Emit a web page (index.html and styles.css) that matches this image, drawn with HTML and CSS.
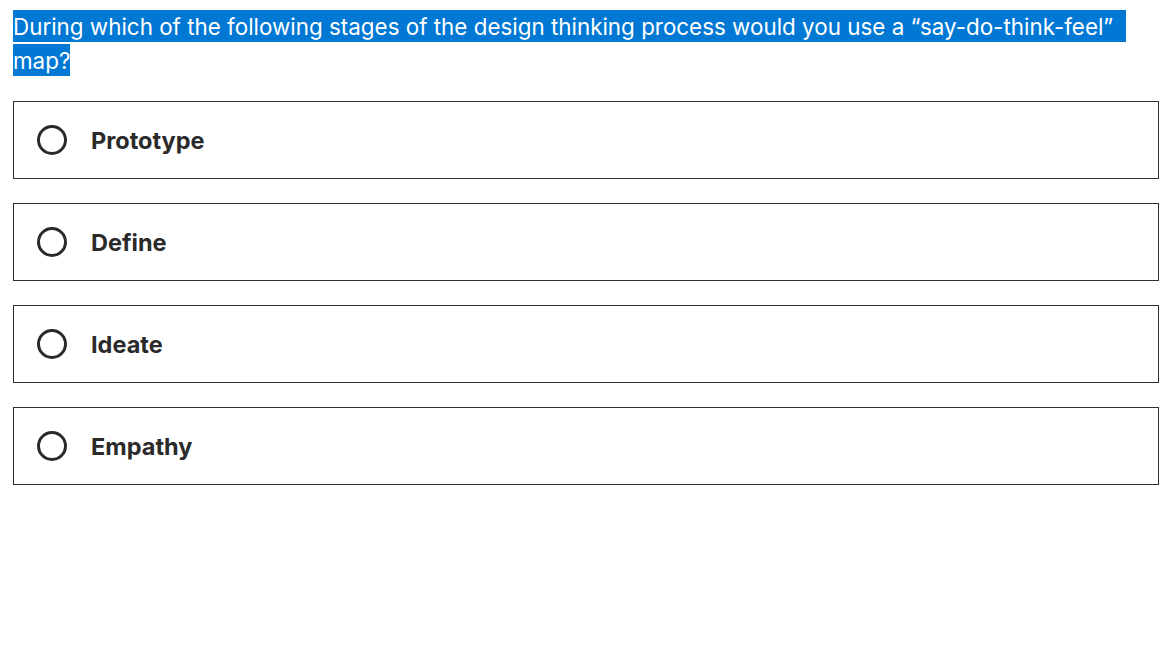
FILE: index.html
```html
<!DOCTYPE html>
<html lang="en">
<head>
    <meta charset="UTF-8">
    <title>Quiz question</title>
    <link rel="stylesheet" href="styles.css">
</head>
<body>
    <div class="question">
        <p class="prompt"><span class="selected">During which of the following stages of the design thinking process would you use a “say-do-think-feel”&nbsp;&nbsp;</span> <span class="selected">map?</span></p>

        <div class="options">
            <label class="option">
                <span class="radio"></span>
                <span class="option-text">Prototype</span>
            </label>
            <label class="option">
                <span class="radio"></span>
                <span class="option-text">Define</span>
            </label>
            <label class="option">
                <span class="radio"></span>
                <span class="option-text">Ideate</span>
            </label>
            <label class="option">
                <span class="radio"></span>
                <span class="option-text">Empathy</span>
            </label>
        </div>
    </div>
</body>
</html>
```

FILE: styles.css
```css
* {
    margin: 0;
    padding: 0;
    box-sizing: border-box;
}

body {
    background: #fff;
    color: #2a2a2a;
    font-family: "Inter", "Open Sans", sans-serif;
}

.question {
    padding: 10px 9px 0 13px;
}

.prompt {
    font-size: 22.4px;
    line-height: 34px;
}

.selected {
    background: #0078d4;
    color: #fff;
    padding: 3px 0 2px;
}

.options {
    display: flex;
    flex-direction: column;
    gap: 24px;
    margin-top: 23px;
}

.option {
    display: flex;
    align-items: center;
    height: 78px;
    border: 1px solid #2f2f2f;
    padding-left: 23px;
    cursor: pointer;
}

.radio {
    width: 30px;
    height: 30px;
    border: 3px solid #2a2a2a;
    border-radius: 50%;
    flex-shrink: 0;
}

.option-text {
    margin-left: 24px;
    font-size: 23.5px;
    font-weight: 700;
    color: #2a2a2a;
}
```
